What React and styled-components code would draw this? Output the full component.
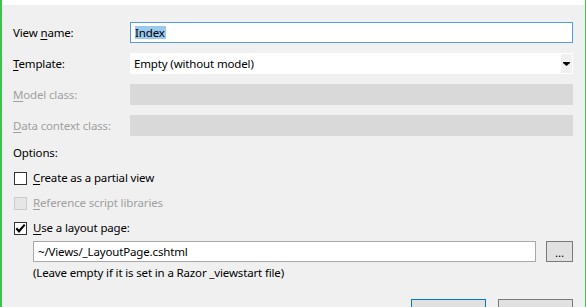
import React from 'react'
import styled, { createGlobalStyle } from 'styled-components'

const GlobalStyle = createGlobalStyle`
    html, body {
        margin: 0;
        padding: 0;
        background: #f0f0f0;
    }
    * {
        box-sizing: border-box;
    }
`

const Window = styled.div`
    width: 586px;
    height: 307px;
    overflow: hidden;
    background: #f0f0f0;
    border-left: 2px solid #3cc34b;
    border-right: 1px solid #3cc34b;
    font-family: "Noto Sans", "Open Sans", sans-serif;
    font-size: 11.5px;
    letter-spacing: -0.15px;
    color: #000;
    display: flex;
    flex-direction: column;
`

const TopStrip = styled.div`
    height: 5px;
    background: #fff;
    flex: none;
`

const Body = styled.div`
    padding: 17px 12px 0 11px;
    display: flex;
    flex-direction: column;
`

const FieldGrid = styled.div`
    display: grid;
    grid-template-columns: 117px 1fr;
    grid-auto-rows: 21px;
    row-gap: 10px;
    align-items: center;
`

const Label = styled.label`
    line-height: 16px;
    white-space: nowrap;
    color: ${(p) => (p.disabled ? '#a0a0a0' : '#000')};
`

const Key = styled.u`
    text-decoration-thickness: 1px;
    text-underline-offset: 2px;
`

const TextInput = styled.div`
    height: 21px;
    display: flex;
    align-items: center;
    padding-left: 4px;
    background: ${(p) => (p.disabled ? '#d9d9d9' : '#fff')};
    border: 1px solid ${(p) => (p.focused ? '#569de5' : p.bordered ? '#a9a9a9' : 'transparent')};
    line-height: 16px;
    white-space: nowrap;
    overflow: hidden;
`

const Selected = styled.span`
    background: #99c9ef;
    padding: 0 1px 0 0;
    line-height: 13px;
`

const Select = styled.div`
    height: 21px;
    background: #fff;
    display: flex;
    align-items: center;
    justify-content: space-between;
    padding: 1px 1px 1px 4px;
    line-height: 16px;
`

const DropButton = styled.div`
    width: 11px;
    height: 19px;
    background: #f0f0f0;
    display: flex;
    align-items: center;
    justify-content: center;
`

const SectionTitle = styled.div`
    margin-top: 9px;
    line-height: 16px;
`

const CheckList = styled.div`
    margin-top: 7px;
    display: flex;
    flex-direction: column;
    gap: 5px;
`

const CheckRow = styled.div`
    height: 20px;
    display: flex;
    align-items: center;
    gap: 6px;
    padding-left: 1px;
    line-height: 16px;
    color: ${(p) => (p.disabled ? '#a0a0a0' : '#000')};
`

const Box = styled.span`
    width: 13px;
    height: 13px;
    flex: none;
    display: flex;
    align-items: center;
    justify-content: center;
    background: ${(p) => (p.disabled ? '#e6e6e6' : '#fff')};
    border: 1px solid ${(p) => (p.disabled ? '#cccccc' : '#333333')};
`

const PathRow = styled.div`
    margin: 3px 0 0 20px;
    display: flex;
    gap: 10px;
`

const PathInput = styled(TextInput)`
    flex: 1;
`

const BrowseButton = styled.div`
    width: 27px;
    height: 21px;
    background: #e1e1e1;
    border: 1px solid #7a7a7a;
    display: flex;
    align-items: flex-end;
    justify-content: center;
    padding-bottom: 3px;
    line-height: 10px;
`

const Note = styled.div`
    margin: 3px 0 0 20px;
    line-height: 16px;
`

const ButtonBar = styled.div`
    margin-top: 18px;
    display: flex;
    justify-content: flex-end;
    gap: 12px;
`

const DialogButton = styled.div`
    width: 75px;
    height: 23px;
    background: #e1e1e1;
    border: 1px solid ${(p) => (p.primary ? '#0078d7' : '#7a7a7a')};
`

const Check = () => (
    <svg width="11" height="11" viewBox="0 0 11 11">
        <path d="M1.3 5.2 L4 8.3 L9.7 1.6" fill="none" stroke="#000" strokeWidth="2.1" />
    </svg>
)

const Arrow = () => (
    <svg width="7" height="4" viewBox="0 0 7 4">
        <path d="M0 0 H7 V1 L3.5 4 L0 1 Z" fill="#000" />
    </svg>
)

const App = () => {
    return (
        <>
            <GlobalStyle />
            <Window>
                <TopStrip />
                <Body>
                    <FieldGrid>
                        <Label>View <Key>n</Key>ame:</Label>
                        <TextInput focused>
                            <Selected>Index</Selected>
                        </TextInput>

                        <Label><Key>T</Key>emplate:</Label>
                        <Select>
                            <span>Empty (without model)</span>
                            <DropButton><Arrow /></DropButton>
                        </Select>

                        <Label disabled><Key>M</Key>odel class:</Label>
                        <TextInput disabled />

                        <Label disabled><Key>D</Key>ata context class:</Label>
                        <TextInput disabled />
                    </FieldGrid>

                    <SectionTitle>Options:</SectionTitle>
                    <CheckList>
                        <CheckRow>
                            <Box />
                            <span><Key>C</Key>reate as a partial view</span>
                        </CheckRow>
                        <CheckRow disabled>
                            <Box disabled />
                            <span><Key>R</Key>eference script libraries</span>
                        </CheckRow>
                        <CheckRow>
                            <Box><Check /></Box>
                            <span><Key>U</Key>se a layout page:</span>
                        </CheckRow>
                    </CheckList>

                    <PathRow>
                        <PathInput bordered>~/Views/_LayoutPage.cshtml</PathInput>
                        <BrowseButton>...</BrowseButton>
                    </PathRow>
                    <Note>(Leave empty if it is set in a Razor _viewstart file)</Note>

                    <ButtonBar>
                        <DialogButton primary />
                        <DialogButton />
                    </ButtonBar>
                </Body>
            </Window>
        </>
    )
}

export default App
